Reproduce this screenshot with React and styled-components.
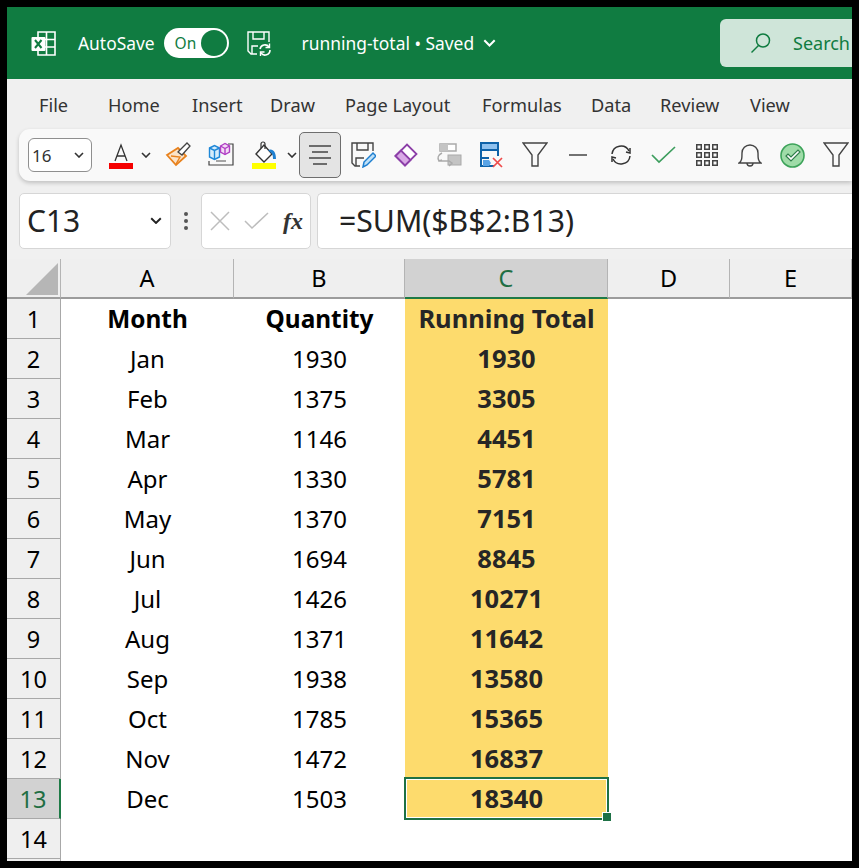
import React from "react";
import styled, { createGlobalStyle } from "styled-components";

const Global = createGlobalStyle`
  html, body { margin: 0; padding: 0; background: #000; }
  body { font-family: "Noto Sans", "Open Sans", sans-serif; }
  * { box-sizing: border-box; }
`;

const Frame = styled.div`
  width: 845px; height: 854px; margin: 7px; background: #f0f0f0; overflow: hidden;
`;
const TitleBar = styled.header`
  height: 72px; background: #107c41; display: flex; align-items: center; color: #fff; padding-left: 24px;
`;
const TitleText = styled.span`
  font-size: 17.4px; color: #fff; white-space: nowrap; margin-left: ${p => p.$ml || 0}px;
`;
const Toggle = styled.div`
  width: 65px; height: 30px; border-radius: 15px; background: #fff; margin-left: 9px;
  display: flex; align-items: center; justify-content: space-between; padding: 0 2px 0 11px;
  color: #107c41; font-size: 15.5px;
`;
const Knob = styled.span`
  width: 26px; height: 26px; border-radius: 50%; background: #107c41;
`;
const Search = styled.div`
  margin-left: auto; width: 132px; height: 48px; background: #cfe5d9;
  border-radius: 6px 0 0 6px; display: flex; align-items: center; padding-left: 30px; gap: 21px;
  color: #107c41; font-size: 18px; overflow: hidden; flex: none;
`;
const Menu = styled.nav`
  height: 50px; display: flex; align-items: center; padding: 2px 0 0 32px;
  font-size: 18.2px; color: #333;
`;
const MenuItem = styled.span`
  white-space: nowrap; flex: none; width: ${p => p.$w}px;
`;
const ToolPill = styled.div`
  margin-left: 12px; height: 52px; background: #f9f9f9; border-radius: 11px 0 0 11px;
  box-shadow: 0 2px 4px rgba(0,0,0,.2); display: flex; align-items: center; padding-left: 9px;
`;
const FontSize = styled.div`
  width: 64px; height: 34px; border: 1px solid #8f8f8f; border-radius: 6px; background: #fff;
  display: flex; align-items: center; justify-content: space-between; padding: 0 7px 0 3px;
  font-size: 17px; color: #333; margin-right: 14px; flex: none;
`;
const Slot = styled.div`
  width: ${p => p.$w || 43}px; height: 46px; flex: none; display: flex; align-items: center; justify-content: center;
  ${p => p.$active && `background:#e4e4e4;border:1px solid #6e6e6e;border-radius:5px;`}
`;
const FormulaRow = styled.div`
  display: flex; height: 56px; margin-top: 12px; padding-left: 12px; align-items: stretch;
`;
const Box = styled.div`
  background: #fff; border: 1px solid #d6d6d6; border-radius: 5px; display: flex; align-items: center;
  width: ${p => p.$w}px; flex: none;
`;
const NameBox = styled(Box)`
  justify-content: space-between; padding: 0 8px 1px 7px; font-size: 30px; color: #222;
`;
const Dots = styled.div`
  width: 30px; flex: none; display: flex; flex-direction: column; align-items: center; justify-content: center; gap: 3px;
`;
const Dot = styled.span`
  width: 4px; height: 4px; border-radius: 50%; background: #555;
`;
const FxBox = styled(Box)`
  padding: 0 7px 0 8px; justify-content: space-between;
`;
const Fx = styled.span`
  font-family: "Liberation Serif", "DejaVu Serif", serif; font-style: italic; font-weight: 700; font-size: 24px; color: #333;
`;
const FormulaBox = styled(Box)`
  flex: 1; margin-left: 6px; border-right: none; border-radius: 5px 0 0 5px; padding: 0 0 2px 21px;
  font-size: 30.2px; color: #222; white-space: nowrap;
`;
const Sheet = styled.div`
  margin-top: 10px; display: grid; grid-template-columns: 54px 173px 171px 203px 122px 122px;
  grid-auto-rows: 40px; background: #fff;
`;
const Corner = styled.div`
  background: #efefef; border-bottom: 2px solid #9c9c9c; border-right: 1px solid #b4b4b4;
  display: flex; align-items: flex-end; justify-content: flex-end; padding: 0 2px 2px 0;
`;
const ColHead = styled.div`
  display: flex; align-items: center; justify-content: center; font-size: 23.5px;
  background: ${p => p.$sel ? "#d2d2d2" : "#efefef"}; color: ${p => p.$sel ? "#1f6e43" : "#000"};
  border-bottom: 2px solid ${p => p.$sel ? "#1e7a46" : "#9c9c9c"};
  border-right: 1px solid #b4b4b4;
`;
const RowHead = styled.div`
  display: flex; align-items: center; justify-content: center; font-size: 23.5px;
  background: ${p => p.$sel ? "#d2d2d2" : "#efefef"}; color: ${p => p.$sel ? "#1f6e43" : "#000"};
  border-bottom: 1px solid #a8a8a8;
  border-right: ${p => p.$sel ? "2px solid #1e7a46" : "1px solid #a8a8a8"};
`;
const Cell = styled.div`
  display: flex; align-items: center; justify-content: center; font-size: ${p => p.$bold ? 24.4 : 24}px; color: #000; background: #fff;
  font-weight: ${p => p.$bold ? 700 : 400}; padding-bottom: 2px;
`;
const TotalCell = styled(Cell)`
  background: #fddb6d; color: #262626; font-weight: 700; font-size: 25.5px; position: relative;
`;
const Selection = styled.span`
  position: absolute; inset: -2px -1px -1px -1px; border: 2px solid #1e7145; box-shadow: inset 0 0 0 1px #fff; pointer-events: none;
`;
const Handle = styled.span`
  position: absolute; right: -4px; bottom: -3px; width: 8px; height: 8px; background: #1e7145; box-shadow: 0 0 0 1px #fff;
`;
const Spacer = styled.span`
  width: ${p => p.$w}px; flex: none;
`;

const Caret = ({ c = "#333", w = 10 }) => (
  <svg width={w} height={w * .6} viewBox="0 0 10 6"><path d="M1 1l4 4 4-4" fill="none" stroke={c} strokeWidth="1.6" /></svg>
);
const ExcelLogo = () => (
  <svg width="25" height="25" viewBox="0 0 25 25" fill="none">
    <path d="M7 1h17v23H7z" fill="none" stroke="#fff" strokeWidth="1.6" />
    <path d="M7 8.500h17M7 16h17M15.500 1v23" stroke="#fff" strokeWidth="1.6" />
    <rect x="0.500" y="6" width="14" height="14" fill="#fff" rx="1" />
    <path d="M4 9l6.500 8M10.500 9L4 17" stroke="#107c41" strokeWidth="2" />
  </svg>
);
const SaveSync = () => (
  <svg width="25" height="25" viewBox="0 0 25 25" fill="none" stroke="#fff" strokeWidth="1.4">
    <path d="M11 23H5l-3-3V1h21v10" />
    <path d="M7 1v7h11V1M6 23v-8h6" />
    <path d="M14 18a5 5 0 0 1 9-2M24 19a5 5 0 0 1-9 3" strokeWidth="1.6" />
    <path d="M23.500 12.500V16.500h-4M14.500 25v-4h4" strokeWidth="1.4" />
  </svg>
);
const SearchIcon = () => (
  <svg width="22" height="22" viewBox="0 0 22 22" fill="none" stroke="#107c41" strokeWidth="1.5">
    <circle cx="13" cy="8.500" r="6.500" /><path d="M8.500 13.500L1.500 20.500" />
  </svg>
);
const FontColor = () => (
  <svg width="26" height="28" viewBox="0 0 26 28" fill="none">
    <path d="M7 20L13 4l6 16M9 15h8" stroke="#333" strokeWidth="1.300" />
    <rect x="1" y="22" width="24" height="6" fill="#f50000" />
  </svg>
);
const Brush = () => (
  <svg width="26" height="26" viewBox="0 0 26 26" fill="none">
    <path d="M2 13l11-7 8 8-10 9z" fill="#fbe3c8" stroke="#e8821e" strokeWidth="1.800" />
    <path d="M6 14l9 1-4 7" stroke="#e8821e" strokeWidth="1.400" />
    <path d="M13 10l9-9 3 3-8 9z" fill="#fff" stroke="#444" strokeWidth="1.300" />
  </svg>
);
const Cubes = () => (
  <svg width="26" height="26" viewBox="0 0 26 26" fill="none">
    <path d="M20 2h5v21H1v-4" stroke="#444" strokeWidth="1.200" />
    <path d="M8 19h10" stroke="#888" strokeWidth="1.500" />
    <path d="M1.500 6l5-2.500 5 2.500v9l-5 2.500-5-2.500z" fill="#d6ecfb" stroke="#1e88d8" strokeWidth="1.400" />
    <path d="M1.500 6l5 2.500 5-2.500M6.500 8.500v9" stroke="#1e88d8" strokeWidth="1.400" />
    <path d="M12.500 4l4.500-2.500L21.500 4v6L17 12.500 12.500 10z" fill="#f4dcf6" stroke="#b03ec4" strokeWidth="1.400" />
    <path d="M12.500 4L17 6.500 21.500 4M17 6.500v6" stroke="#b03ec4" strokeWidth="1.400" />
  </svg>
);
const FillColor = () => (
  <svg width="26" height="28" viewBox="0 0 26 28" fill="none">
    <path d="M5 13L13 4l8 9-8 8z" fill="#fff" stroke="#333" strokeWidth="1.400" />
    <path d="M10 7V3a2 2 0 0 1 4 0v5" stroke="#333" strokeWidth="1.200" />
    <path d="M17 9c5-2 8 2 8 9h-3c0-4-1-6-3-7z" fill="#1e7fd0" />
    <rect x="1" y="22" width="24" height="6" fill="#ffff00" />
  </svg>
);
const AlignCenter = () => (
  <svg width="24" height="20" viewBox="0 0 24 20" stroke="#444" strokeWidth="1.500">
    <path d="M1 1h22M4 7h16M1 13h22M5 19h14" />
  </svg>
);
const SaveEdit = () => (
  <svg width="26" height="26" viewBox="0 0 26 26" fill="none">
    <path d="M10 24H5l-3-3V1h21v8" stroke="#444" strokeWidth="1.400" />
    <path d="M7 1v7h11V1M6 24v-8h8" stroke="#444" strokeWidth="1.400" />
    <path d="M13 25l1-5 9-9 3 3-9 9z" fill="#bfe0f7" stroke="#1e7fd0" strokeWidth="1.500" />
  </svg>
);
const Eraser = () => (
  <svg width="24" height="24" viewBox="0 0 24 24" fill="none">
    <path d="M1.500 13L13 1.500 22.500 11 11 22.500z" fill="#fff" stroke="#8c3fa8" strokeWidth="1.800" />
    <path d="M1.500 13L7 7.500 16.500 17 11 22.500z" fill="#d9aae6" stroke="#8c3fa8" strokeWidth="1.800" />
  </svg>
);
const Transfer = () => (
  <svg width="26" height="26" viewBox="0 0 26 26" fill="none">
    <rect x="4" y="2" width="16" height="7" fill="#fff" stroke="#aaa" strokeWidth="1.500" />
    <rect x="4" y="2" width="8" height="7" fill="#c4c4c4" />
    <rect x="12" y="13" width="13" height="10" fill="#c4c4c4" stroke="#aaa" />
    <path d="M6 11c-4 2-5 5-3 8M2 16l1 3 3-1M3 19h10l3 2-3 3" stroke="#aaa" strokeWidth="1.400" />
  </svg>
);
const TableX = () => (
  <svg width="24" height="26" viewBox="0 0 24 26" fill="none">
    <path d="M1 1h17v7H1z" fill="#8fc1ee" />
    <path d="M14 24H1V1h17v13M1 8h17M1 16h8" stroke="#0f62a8" strokeWidth="2" />
    <path d="M3 18h6l2 3-2 3H3z" fill="#5aa4e6" />
    <path d="M13 16l9 9M22 16l-9 9" stroke="#ef4b4b" strokeWidth="1.700" />
  </svg>
);
const Funnel = () => (
  <svg width="26" height="26" viewBox="0 0 26 26" fill="none" stroke="#444" strokeWidth="1.400">
    <path d="M1 1h24l-9 12v11h-6V13z" />
  </svg>
);
const Dash = () => (
  <svg width="18" height="4" viewBox="0 0 18 4"><path d="M0 2h18" stroke="#444" strokeWidth="1.500" /></svg>
);
const Refresh = () => (
  <svg width="24" height="22" viewBox="0 0 24 22" fill="none" stroke="#333" strokeWidth="1.500">
    <path d="M3 10a9 9 0 0 1 17-3M21 12a9 9 0 0 1-17 3" />
    <path d="M21 4v5l-4-1M3 18v-5l4 1" />
  </svg>
);
const Check = () => (
  <svg width="25" height="18" viewBox="0 0 25 18" fill="none"><path d="M1 9l7 7L24 1" stroke="#3d9e5e" strokeWidth="1.700" /></svg>
);
const Tiles = () => (
  <svg width="22" height="22" viewBox="0 0 22 22" fill="none" stroke="#444" strokeWidth="1.500">
    {[0, 8, 16].flatMap(y => [0, 8, 16].map(x => <rect key={`${x}-${y}`} x={x + .75} y={y + .75} width="4.500" height="4.500" />))}
  </svg>
);
const Bell = () => (
  <svg width="24" height="26" viewBox="0 0 24 26" fill="none" stroke="#444" strokeWidth="1.400">
    <path d="M1 21c3-2 3-5 3-10a8 8 0 0 1 16 0c0 5 0 8 3 10z" />
    <path d="M9 21a3 3 0 0 0 6 0" />
  </svg>
);
const GreenCheck = () => (
  <svg width="25" height="25" viewBox="0 0 25 25" fill="none">
    <circle cx="12.500" cy="12.500" r="11.500" fill="#9fdca8" stroke="#3da35a" strokeWidth="1.600" />
    <path d="M6 13l5 5 9-9-2-2-7 7-3-3z" fill="#fff" stroke="#2f7d4a" strokeWidth="1.200" />
  </svg>
);
const CornerTriangle = () => (
  <svg width="32" height="32" viewBox="0 0 32 32"><path d="M32 0v32H0z" fill="#b6b6b6" /></svg>
);
const XMark = () => (
  <svg width="20" height="20" viewBox="0 0 20 20"><path d="M1 1l18 18M19 1L1 19" stroke="#bdbdbd" strokeWidth="1.500" /></svg>
);
const TickMark = () => (
  <svg width="25" height="18" viewBox="0 0 25 18" fill="none"><path d="M1 9l7 7L24 1" stroke="#bdbdbd" strokeWidth="1.500" /></svg>
);

const rows = [
  ["Jan", 1930, 1930], ["Feb", 1375, 3305], ["Mar", 1146, 4451], ["Apr", 1330, 5781],
  ["May", 1370, 7151], ["Jun", 1694, 8845], ["Jul", 1426, 10271], ["Aug", 1371, 11642],
  ["Sep", 1938, 13580], ["Oct", 1785, 15365], ["Nov", 1472, 16837], ["Dec", 1503, 18340],
];
const menu = [["File", 69], ["Home", 84], ["Insert", 78], ["Draw", 75], ["Page Layout", 137], ["Formulas", 109], ["Data", 69], ["Review", 90], ["View", 50]];

export default function App() {
  return (
    <>
      <Global />
      <Frame>
        <TitleBar>
          <ExcelLogo />
          <TitleText $ml={22}>AutoSave</TitleText>
          <Toggle>On<Knob /></Toggle>
          <Spacer $w={17} />
          <SaveSync />
          <TitleText $ml={31}>running-total • Saved</TitleText>
          <Spacer $w={9} />
          <Caret c="#fff" w={13} />
          <Search><SearchIcon />Search</Search>
        </TitleBar>
        <Menu>
          {menu.map(([m, w]) => <MenuItem key={m} $w={w}>{m}</MenuItem>)}
        </Menu>
        <ToolPill>
          <FontSize>16<Caret /></FontSize>
          <Slot $w={30}><FontColor /></Slot>
          <Slot $w={20}><Caret /></Slot>
          <Slot><Brush /></Slot>
          <Slot><Cubes /></Slot>
          <Slot $w={43}><FillColor /></Slot>
          <Slot $w={14}><Caret /></Slot>
          <Slot $w={42} $active><AlignCenter /></Slot>
          <Slot><SaveEdit /></Slot>
          <Slot><Eraser /></Slot>
          <Slot><Transfer /></Slot>
          <Slot><TableX /></Slot>
          <Slot><Funnel /></Slot>
          <Slot><Dash /></Slot>
          <Slot><Refresh /></Slot>
          <Slot><Check /></Slot>
          <Slot><Tiles /></Slot>
          <Slot><Bell /></Slot>
          <Slot><GreenCheck /></Slot>
          <Slot><Funnel /></Slot>
        </ToolPill>
        <FormulaRow>
          <NameBox $w={152}>C13<Caret c="#222" w={12} /></NameBox>
          <Dots><Dot /><Dot /><Dot /></Dots>
          <FxBox $w={110}><XMark /><TickMark /><Fx>fx</Fx></FxBox>
          <FormulaBox>=SUM($B$2:B13)</FormulaBox>
        </FormulaRow>
        <Sheet>
          <Corner><CornerTriangle /></Corner>
          {["A", "B", "C", "D", "E"].map(c => <ColHead key={c} $sel={c === "C"}>{c}</ColHead>)}
          <RowHead>1</RowHead>
          <Cell $bold>Month</Cell><Cell $bold>Quantity</Cell><TotalCell>Running Total</TotalCell><Cell /><Cell />
          {rows.map((r, i) => (
            <React.Fragment key={r[0]}>
              <RowHead $sel={i === 11}>{i + 2}</RowHead>
              <Cell>{r[0]}</Cell>
              <Cell>{r[1]}</Cell>
              <TotalCell>{r[2]}{i === 11 && <Selection><Handle /></Selection>}</TotalCell>
              <Cell /><Cell />
            </React.Fragment>
          ))}
          <RowHead>14</RowHead><Cell /><Cell /><Cell /><Cell /><Cell />
          <RowHead /><Cell /><Cell /><Cell /><Cell /><Cell />
        </Sheet>
      </Frame>
    </>
  );
}
